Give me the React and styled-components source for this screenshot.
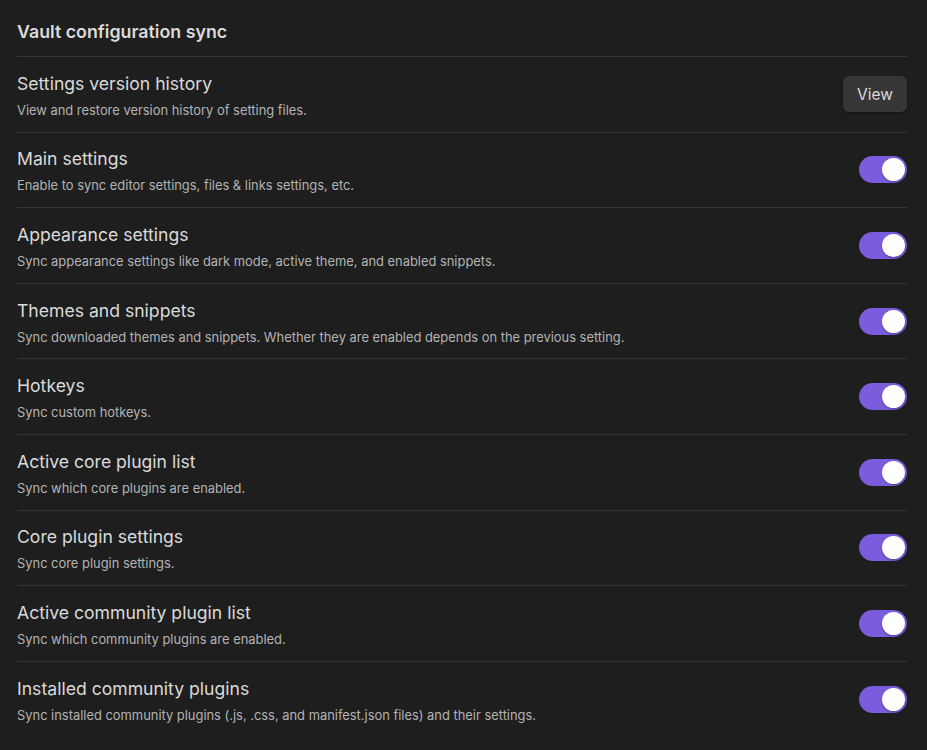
import styled, { createGlobalStyle } from "styled-components";

const GlobalStyle = createGlobalStyle`
  html, body {
    margin: 0;
    padding: 0;
    background: #1e1e1e;
  }
  body {
    font-family: Inter, "Noto Sans", sans-serif;
    -webkit-font-smoothing: antialiased;
  }
`;

const Page = styled.div`
  min-height: 750px;
  background: #1e1e1e;
  padding: 0 20px 0 17px;
  box-sizing: border-box;
`;

const Heading = styled.h3`
  margin: 0;
  padding: 21px 0 14px;
  font-size: 17.8px;
  font-weight: 600;
  color: #dadada;
  border-bottom: 1px solid #363636;
`;

const Row = styled.div`
  display: flex;
  align-items: center;
  gap: 16px;
  height: 75.6px;
  border-bottom: 1px solid ${({ $last }) => ($last ? "transparent" : "#363636")};
  box-sizing: border-box;
`;

const Info = styled.div`
  flex: 1;
  display: flex;
  flex-direction: column;
  gap: 7px;
  padding-top: 3px;
`;

const Name = styled.div`
  font-size: 17.6px;
  color: #dadada;
  line-height: 22px;
`;

const Desc = styled.div`
  font-size: 12.9px;
  color: #b3b3b3;
  line-height: 17px;
`;

const Button = styled.button`
  height: 36px;
  padding: 0 14px;
  border: none;
  border-radius: 6px;
  background: #363636;
  color: #dadada;
  font-family: inherit;
  font-size: 15.5px;
  box-shadow: 0 1px 2px rgba(0, 0, 0, 0.4);
`;

const Toggle = styled.div`
  width: 48px;
  height: 27px;
  border-radius: 14px;
  background: ${({ $on }) => ($on ? "#7b5cdc" : "#4a4a4a")};
  display: flex;
  align-items: center;
  justify-content: ${({ $on }) => ($on ? "flex-end" : "flex-start")};
  padding: 0 2px;
  box-sizing: border-box;
`;

const Knob = styled.div`
  width: 23px;
  height: 23px;
  border-radius: 50%;
  background: #ffffff;
  box-shadow: 0 1px 2px rgba(0, 0, 0, 0.3);
`;

const settings = [
  ["Main settings", "Enable to sync editor settings, files & links settings, etc."],
  ["Appearance settings", "Sync appearance settings like dark mode, active theme, and enabled snippets."],
  ["Themes and snippets", "Sync downloaded themes and snippets. Whether they are enabled depends on the previous setting."],
  ["Hotkeys", "Sync custom hotkeys."],
  ["Active core plugin list", "Sync which core plugins are enabled."],
  ["Core plugin settings", "Sync core plugin settings."],
  ["Active community plugin list", "Sync which community plugins are enabled."],
  ["Installed community plugins", "Sync installed community plugins (.js, .css, and manifest.json files) and their settings."],
];

export default function App() {
  return (
    <>
      <GlobalStyle />
      <Page>
        <Heading>Vault configuration sync</Heading>
        <Row>
          <Info>
            <Name>Settings version history</Name>
            <Desc>View and restore version history of setting files.</Desc>
          </Info>
          <Button>View</Button>
        </Row>
        {settings.map(([name, desc], i) => (
          <Row key={name} $last={i === settings.length - 1}>
            <Info>
              <Name>{name}</Name>
              <Desc>{desc}</Desc>
            </Info>
            <Toggle $on>
              <Knob />
            </Toggle>
          </Row>
        ))}
      </Page>
    </>
  );
}
